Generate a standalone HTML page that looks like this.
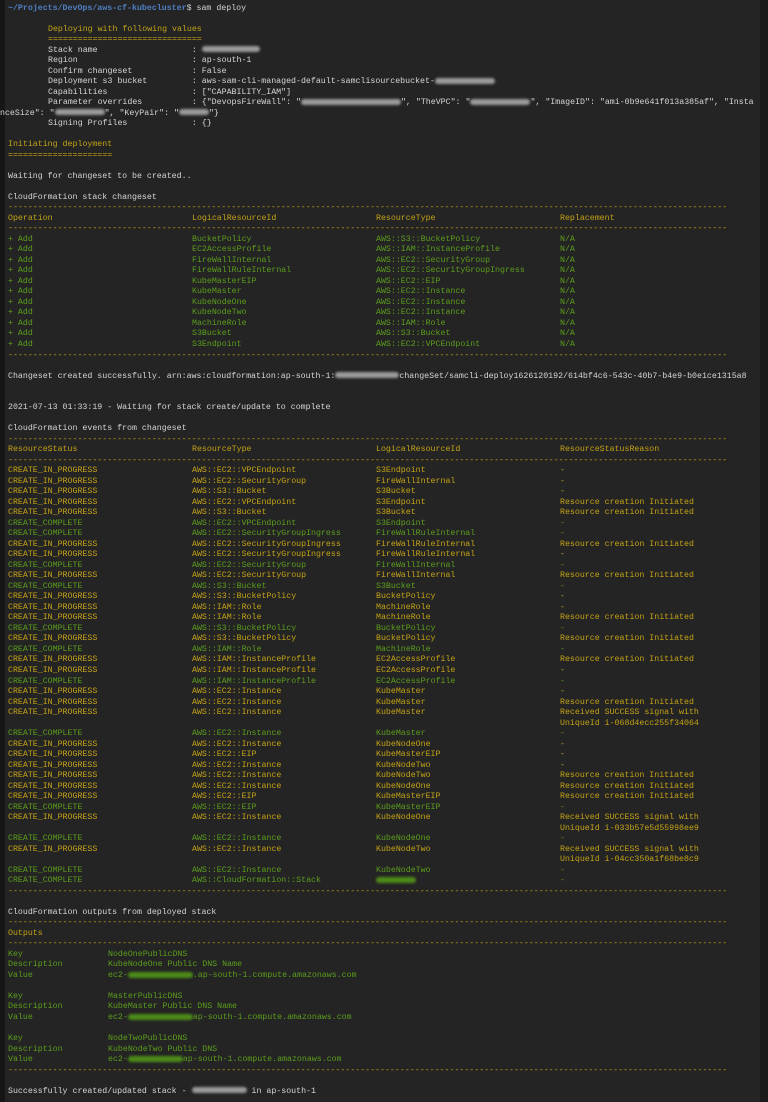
<!DOCTYPE html>
<html><head><meta charset="utf-8"><style>
body{margin:0;width:768px;height:1102px;background:#242424;overflow:hidden;position:relative;font-family:"Liberation Mono",monospace;font-size:8.28px;color:#d6d6d6}
.ls{position:absolute;left:0;top:0;width:5px;height:1102px;background:#161616}
.rs{position:absolute;right:0;top:0;width:8px;height:1102px;background:#1a1a1a}
.t{position:absolute;left:0;top:3.5px;width:760px}
.l{position:relative;height:10.53px;line-height:10.53px;white-space:pre}
.l span{position:absolute;top:0}
.a{left:8px}.b{left:192px}.c{left:376px}.d{left:560px}.k{left:108px}.i{left:48px}
.y{color:#c4a316}.g{color:#5c9e1c}.bl{color:#4f7fc2;font-weight:bold}
.x{display:inline-block;height:6px;background:#9a9a9a;border-radius:3px;filter:blur(1.2px);vertical-align:middle}
.xg{display:inline-block;height:6px;background:#4c8a18;border-radius:3px;filter:blur(1.2px);vertical-align:middle}
</style></head><body>
<div class="ls"></div><div class="rs"></div>
<div class="t">
<div class="l"><span class="a"><b class="bl">~/Projects/DevOps/aws-cf-kubecluster</b>$ sam deploy</span></div>
<div class="l"></div>
<div class="l y"><span class="i">Deploying with following values</span></div>
<div class="l y"><span class="i">===============================</span></div>
<div class="l"><span class="i">Stack name                   : <i class="x" style="width:58px"></i></span></div>
<div class="l"><span class="i">Region                       : ap-south-1</span></div>
<div class="l"><span class="i">Confirm changeset            : False</span></div>
<div class="l"><span class="i">Deployment s3 bucket         : aws-sam-cli-managed-default-samclisourcebucket-<i class="x" style="width:60px"></i></span></div>
<div class="l"><span class="i">Capabilities                 : ["CAPABILITY_IAM"]</span></div>
<div class="l"><span class="i">Parameter overrides          : {"DevopsFireWall": "<i class="x" style="width:100px"></i>", "TheVPC": "<i class="x" style="width:60px"></i>", "ImageID": "ami-0b9e641f013a385af", "Insta</span></div>
<div class="l"><span style="left:0">nceSize": "<i class="x" style="width:50px"></i>", "KeyPair": "<i class="x" style="width:30px"></i>"}</span></div>
<div class="l"><span class="i">Signing Profiles             : {}</span></div>
<div class="l"></div>
<div class="l y"><span class="a">Initiating deployment</span></div>
<div class="l y"><span class="a">=====================</span></div>
<div class="l"></div>
<div class="l"><span class="a">Waiting for changeset to be created..</span></div>
<div class="l"></div>
<div class="l"><span class="a">CloudFormation stack changeset</span></div>
<div class="l y"><span class="a">-------------------------------------------------------------------------------------------------------------------------------------------------</span></div>
<div class="l y"><span class="a">Operation</span><span class="b">LogicalResourceId</span><span class="c">ResourceType</span><span class="d">Replacement</span></div>
<div class="l y"><span class="a">-------------------------------------------------------------------------------------------------------------------------------------------------</span></div>
<div class="l g"><span class="a">+ Add</span><span class="b">BucketPolicy</span><span class="c">AWS::S3::BucketPolicy</span><span class="d">N/A</span></div>
<div class="l g"><span class="a">+ Add</span><span class="b">EC2AccessProfile</span><span class="c">AWS::IAM::InstanceProfile</span><span class="d">N/A</span></div>
<div class="l g"><span class="a">+ Add</span><span class="b">FireWallInternal</span><span class="c">AWS::EC2::SecurityGroup</span><span class="d">N/A</span></div>
<div class="l g"><span class="a">+ Add</span><span class="b">FireWallRuleInternal</span><span class="c">AWS::EC2::SecurityGroupIngress</span><span class="d">N/A</span></div>
<div class="l g"><span class="a">+ Add</span><span class="b">KubeMasterEIP</span><span class="c">AWS::EC2::EIP</span><span class="d">N/A</span></div>
<div class="l g"><span class="a">+ Add</span><span class="b">KubeMaster</span><span class="c">AWS::EC2::Instance</span><span class="d">N/A</span></div>
<div class="l g"><span class="a">+ Add</span><span class="b">KubeNodeOne</span><span class="c">AWS::EC2::Instance</span><span class="d">N/A</span></div>
<div class="l g"><span class="a">+ Add</span><span class="b">KubeNodeTwo</span><span class="c">AWS::EC2::Instance</span><span class="d">N/A</span></div>
<div class="l g"><span class="a">+ Add</span><span class="b">MachineRole</span><span class="c">AWS::IAM::Role</span><span class="d">N/A</span></div>
<div class="l g"><span class="a">+ Add</span><span class="b">S3Bucket</span><span class="c">AWS::S3::Bucket</span><span class="d">N/A</span></div>
<div class="l g"><span class="a">+ Add</span><span class="b">S3Endpoint</span><span class="c">AWS::EC2::VPCEndpoint</span><span class="d">N/A</span></div>
<div class="l y"><span class="a">-------------------------------------------------------------------------------------------------------------------------------------------------</span></div>
<div class="l"></div>
<div class="l"><span class="a">Changeset created successfully. arn:aws:cloudformation:ap-south-1:<i class="x" style="width:64px"></i>changeSet/samcli-deploy1626120192/614bf4c6-543c-40b7-b4e9-b0e1ce1315a8</span></div>
<div class="l"></div>
<div class="l"></div>
<div class="l"><span class="a">2021-07-13 01:33:19 - Waiting for stack create/update to complete</span></div>
<div class="l"></div>
<div class="l"><span class="a">CloudFormation events from changeset</span></div>
<div class="l y"><span class="a">-------------------------------------------------------------------------------------------------------------------------------------------------</span></div>
<div class="l y"><span class="a">ResourceStatus</span><span class="b">ResourceType</span><span class="c">LogicalResourceId</span><span class="d">ResourceStatusReason</span></div>
<div class="l y"><span class="a">-------------------------------------------------------------------------------------------------------------------------------------------------</span></div>
<div class="l y"><span class="a">CREATE_IN_PROGRESS</span><span class="b">AWS::EC2::VPCEndpoint</span><span class="c">S3Endpoint</span><span class="d">-</span></div>
<div class="l y"><span class="a">CREATE_IN_PROGRESS</span><span class="b">AWS::EC2::SecurityGroup</span><span class="c">FireWallInternal</span><span class="d">-</span></div>
<div class="l y"><span class="a">CREATE_IN_PROGRESS</span><span class="b">AWS::S3::Bucket</span><span class="c">S3Bucket</span><span class="d">-</span></div>
<div class="l y"><span class="a">CREATE_IN_PROGRESS</span><span class="b">AWS::EC2::VPCEndpoint</span><span class="c">S3Endpoint</span><span class="d">Resource creation Initiated</span></div>
<div class="l y"><span class="a">CREATE_IN_PROGRESS</span><span class="b">AWS::S3::Bucket</span><span class="c">S3Bucket</span><span class="d">Resource creation Initiated</span></div>
<div class="l g"><span class="a">CREATE_COMPLETE</span><span class="b">AWS::EC2::VPCEndpoint</span><span class="c">S3Endpoint</span><span class="d">-</span></div>
<div class="l g"><span class="a">CREATE_COMPLETE</span><span class="b">AWS::EC2::SecurityGroupIngress</span><span class="c">FireWallRuleInternal</span><span class="d">-</span></div>
<div class="l y"><span class="a">CREATE_IN_PROGRESS</span><span class="b">AWS::EC2::SecurityGroupIngress</span><span class="c">FireWallRuleInternal</span><span class="d">Resource creation Initiated</span></div>
<div class="l y"><span class="a">CREATE_IN_PROGRESS</span><span class="b">AWS::EC2::SecurityGroupIngress</span><span class="c">FireWallRuleInternal</span><span class="d">-</span></div>
<div class="l g"><span class="a">CREATE_COMPLETE</span><span class="b">AWS::EC2::SecurityGroup</span><span class="c">FireWallInternal</span><span class="d">-</span></div>
<div class="l y"><span class="a">CREATE_IN_PROGRESS</span><span class="b">AWS::EC2::SecurityGroup</span><span class="c">FireWallInternal</span><span class="d">Resource creation Initiated</span></div>
<div class="l g"><span class="a">CREATE_COMPLETE</span><span class="b">AWS::S3::Bucket</span><span class="c">S3Bucket</span><span class="d">-</span></div>
<div class="l y"><span class="a">CREATE_IN_PROGRESS</span><span class="b">AWS::S3::BucketPolicy</span><span class="c">BucketPolicy</span><span class="d">-</span></div>
<div class="l y"><span class="a">CREATE_IN_PROGRESS</span><span class="b">AWS::IAM::Role</span><span class="c">MachineRole</span><span class="d">-</span></div>
<div class="l y"><span class="a">CREATE_IN_PROGRESS</span><span class="b">AWS::IAM::Role</span><span class="c">MachineRole</span><span class="d">Resource creation Initiated</span></div>
<div class="l g"><span class="a">CREATE_COMPLETE</span><span class="b">AWS::S3::BucketPolicy</span><span class="c">BucketPolicy</span><span class="d">-</span></div>
<div class="l y"><span class="a">CREATE_IN_PROGRESS</span><span class="b">AWS::S3::BucketPolicy</span><span class="c">BucketPolicy</span><span class="d">Resource creation Initiated</span></div>
<div class="l g"><span class="a">CREATE_COMPLETE</span><span class="b">AWS::IAM::Role</span><span class="c">MachineRole</span><span class="d">-</span></div>
<div class="l y"><span class="a">CREATE_IN_PROGRESS</span><span class="b">AWS::IAM::InstanceProfile</span><span class="c">EC2AccessProfile</span><span class="d">Resource creation Initiated</span></div>
<div class="l y"><span class="a">CREATE_IN_PROGRESS</span><span class="b">AWS::IAM::InstanceProfile</span><span class="c">EC2AccessProfile</span><span class="d">-</span></div>
<div class="l g"><span class="a">CREATE_COMPLETE</span><span class="b">AWS::IAM::InstanceProfile</span><span class="c">EC2AccessProfile</span><span class="d">-</span></div>
<div class="l y"><span class="a">CREATE_IN_PROGRESS</span><span class="b">AWS::EC2::Instance</span><span class="c">KubeMaster</span><span class="d">-</span></div>
<div class="l y"><span class="a">CREATE_IN_PROGRESS</span><span class="b">AWS::EC2::Instance</span><span class="c">KubeMaster</span><span class="d">Resource creation Initiated</span></div>
<div class="l y"><span class="a">CREATE_IN_PROGRESS</span><span class="b">AWS::EC2::Instance</span><span class="c">KubeMaster</span><span class="d">Received SUCCESS signal with</span></div>
<div class="l y"><span class="d">UniqueId i-068d4ecc255f34064</span></div>
<div class="l g"><span class="a">CREATE_COMPLETE</span><span class="b">AWS::EC2::Instance</span><span class="c">KubeMaster</span><span class="d">-</span></div>
<div class="l y"><span class="a">CREATE_IN_PROGRESS</span><span class="b">AWS::EC2::Instance</span><span class="c">KubeNodeOne</span><span class="d">-</span></div>
<div class="l y"><span class="a">CREATE_IN_PROGRESS</span><span class="b">AWS::EC2::EIP</span><span class="c">KubeMasterEIP</span><span class="d">-</span></div>
<div class="l y"><span class="a">CREATE_IN_PROGRESS</span><span class="b">AWS::EC2::Instance</span><span class="c">KubeNodeTwo</span><span class="d">-</span></div>
<div class="l y"><span class="a">CREATE_IN_PROGRESS</span><span class="b">AWS::EC2::Instance</span><span class="c">KubeNodeTwo</span><span class="d">Resource creation Initiated</span></div>
<div class="l y"><span class="a">CREATE_IN_PROGRESS</span><span class="b">AWS::EC2::Instance</span><span class="c">KubeNodeOne</span><span class="d">Resource creation Initiated</span></div>
<div class="l y"><span class="a">CREATE_IN_PROGRESS</span><span class="b">AWS::EC2::EIP</span><span class="c">KubeMasterEIP</span><span class="d">Resource creation Initiated</span></div>
<div class="l g"><span class="a">CREATE_COMPLETE</span><span class="b">AWS::EC2::EIP</span><span class="c">KubeMasterEIP</span><span class="d">-</span></div>
<div class="l y"><span class="a">CREATE_IN_PROGRESS</span><span class="b">AWS::EC2::Instance</span><span class="c">KubeNodeOne</span><span class="d">Received SUCCESS signal with</span></div>
<div class="l y"><span class="d">UniqueId i-033b57e5d55998ee9</span></div>
<div class="l g"><span class="a">CREATE_COMPLETE</span><span class="b">AWS::EC2::Instance</span><span class="c">KubeNodeOne</span><span class="d">-</span></div>
<div class="l y"><span class="a">CREATE_IN_PROGRESS</span><span class="b">AWS::EC2::Instance</span><span class="c">KubeNodeTwo</span><span class="d">Received SUCCESS signal with</span></div>
<div class="l y"><span class="d">UniqueId i-04cc350a1f68be8c9</span></div>
<div class="l g"><span class="a">CREATE_COMPLETE</span><span class="b">AWS::EC2::Instance</span><span class="c">KubeNodeTwo</span><span class="d">-</span></div>
<div class="l g"><span class="a">CREATE_COMPLETE</span><span class="b">AWS::CloudFormation::Stack</span><span class="c"><i class="xg" style="width:40px"></i></span><span class="d">-</span></div>
<div class="l y"><span class="a">-------------------------------------------------------------------------------------------------------------------------------------------------</span></div>
<div class="l"></div>
<div class="l"><span class="a">CloudFormation outputs from deployed stack</span></div>
<div class="l y"><span class="a">-------------------------------------------------------------------------------------------------------------------------------------------------</span></div>
<div class="l y"><span class="a">Outputs</span></div>
<div class="l y"><span class="a">-------------------------------------------------------------------------------------------------------------------------------------------------</span></div>
<div class="l g"><span class="a">Key</span><span class="k">NodeOnePublicDNS</span></div>
<div class="l g"><span class="a">Description</span><span class="k">KubeNodeOne Public DNS Name</span></div>
<div class="l g"><span class="a">Value</span><span class="k">ec2-<i class="xg" style="width:65px"></i>.ap-south-1.compute.amazonaws.com</span></div>
<div class="l"></div>
<div class="l g"><span class="a">Key</span><span class="k">MasterPublicDNS</span></div>
<div class="l g"><span class="a">Description</span><span class="k">KubeMaster Public DNS Name</span></div>
<div class="l g"><span class="a">Value</span><span class="k">ec2-<i class="xg" style="width:65px"></i>ap-south-1.compute.amazonaws.com</span></div>
<div class="l"></div>
<div class="l g"><span class="a">Key</span><span class="k">NodeTwoPublicDNS</span></div>
<div class="l g"><span class="a">Description</span><span class="k">KubeNodeTwo Public DNS</span></div>
<div class="l g"><span class="a">Value</span><span class="k">ec2-<i class="xg" style="width:55px"></i>ap-south-1.compute.amazonaws.com</span></div>
<div class="l y"><span class="a">-------------------------------------------------------------------------------------------------------------------------------------------------</span></div>
<div class="l"></div>
<div class="l"><span class="a">Successfully created/updated stack - <i class="x" style="width:55px"></i> in ap-south-1</span></div>
</div>
</body></html>
